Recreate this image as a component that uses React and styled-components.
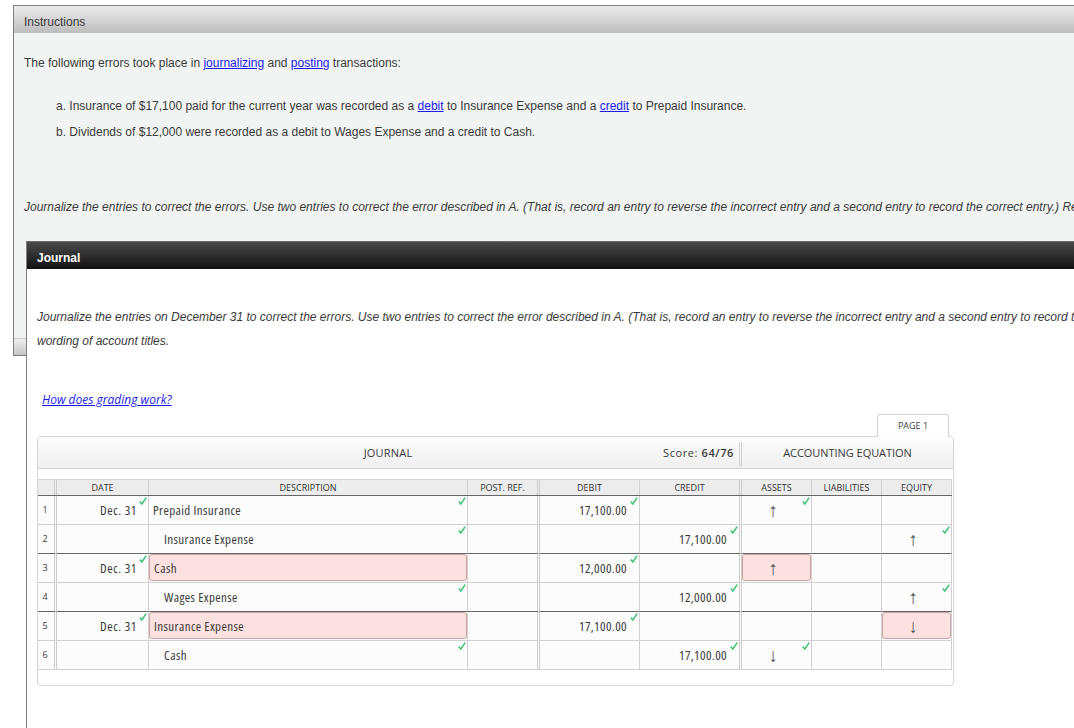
import React from "react";
import styled, { createGlobalStyle } from "styled-components";

const GlobalStyle = createGlobalStyle`
  html, body {
    margin: 0;
    padding: 0;
    height: 100%;
    overflow: hidden;
    background: #fff;
  }
  #root {
    height: 100%;
  }
`;

const COLUMNS = "19px 92px 319px 72px 100px 102px 70px 70px 70px";
const TABLE_FONT = `"Open Sans", "Liberation Sans", sans-serif`;

const rows = [
  { num: 1, date: "Dec. 31", dateCheck: true, desc: "Prepaid Insurance", debit: "17,100.00", assets: "↑", assetsCheck: true },
  { num: 2, desc: "Insurance Expense", indent: true, credit: "17,100.00", equity: "↑", equityCheck: true, divider: true },
  { num: 3, date: "Dec. 31", dateCheck: true, desc: "Cash", wrongDesc: true, debit: "12,000.00", assets: "↑", wrongAssets: true },
  { num: 4, desc: "Wages Expense", indent: true, credit: "12,000.00", equity: "↑", equityCheck: true, divider: true },
  { num: 5, date: "Dec. 31", dateCheck: true, desc: "Insurance Expense", wrongDesc: true, debit: "17,100.00", equity: "↓", wrongEquity: true },
  { num: 6, desc: "Cash", indent: true, credit: "17,100.00", assets: "↓", assetsCheck: true },
];

const Check = () => (
  <CheckIcon viewBox="0 0 8 8" aria-hidden="true">
    <path d="M0.8 4.6 L2.8 7 L7.2 0.6" fill="none" stroke="#47c27c" strokeWidth="1.6" />
  </CheckIcon>
);

const App = () => (
  <>
    <GlobalStyle />
    <Page>
      <Panel>
        <PanelHeader>Instructions</PanelHeader>
        <PanelBody>
          <Intro>
            The following errors took place in <a href="#j">journalizing</a> and{" "}
            <a href="#p">posting</a> transactions:
          </Intro>
          <ErrorList>
            <li>
              a. Insurance of $17,100 paid for the current year was recorded as a{" "}
              <a href="#d">debit</a> to Insurance Expense and a <a href="#c">credit</a> to
              Prepaid Insurance.
            </li>
            <li>b. Dividends of $12,000 were recorded as a debit to Wages Expense and a credit to Cash.</li>
          </ErrorList>
          <Directions>
            Journalize the entries to correct the errors. Use two entries to correct the error
            described in A. (That is, record an entry to reverse the incorrect entry and a second
            entry to record the correct entry.) Refer to the Chart of Accounts for exact wording of
            account titles.
          </Directions>
        </PanelBody>
        <PanelFooter />
      </Panel>

      <JournalWindow>
        <JournalHeader>Journal</JournalHeader>
        <JournalBody>
          <JournalText>
            <span>
              Journalize the entries on December 31 to correct the errors. Use two entries to correct
              the error described in A. (That is, record an entry to reverse the incorrect entry and a
              second entry to record the correct entry.) Refer to the Chart of Accounts for exact
            </span>
            <span>wording of account titles.</span>
          </JournalText>
          <GradingLink href="#g">How does grading work?</GradingLink>
          <TabRow>
            <Tab>PAGE 1</Tab>
          </TabRow>
          <Card>
            <TitleBar>
              <JournalTitle>JOURNAL</JournalTitle>
              <Score>
                Score: <b>64/76</b>
              </Score>
              <EquationTitle>ACCOUNTING EQUATION</EquationTitle>
            </TitleBar>
            <Table>
              <HeadRow>
                <HeadCell $double />
                <HeadCell>DATE</HeadCell>
                <HeadCell>DESCRIPTION</HeadCell>
                <HeadCell $double>POST. REF.</HeadCell>
                <HeadCell>DEBIT</HeadCell>
                <HeadCell $double>CREDIT</HeadCell>
                <HeadCell>ASSETS</HeadCell>
                <HeadCell>LIABILITIES</HeadCell>
                <HeadCell>EQUITY</HeadCell>
              </HeadRow>
              {rows.map((r) => (
                <Row key={r.num}>
                  <NumCell $divider={r.divider}>{r.num}</NumCell>
                  <Cell $divider={r.divider} $align="right">
                    {r.date}
                    {r.dateCheck && <Check />}
                  </Cell>
                  <DescCell $divider={r.divider} $wrong={r.wrongDesc} $indent={r.indent}>
                    {r.desc}
                    {!r.wrongDesc && <Check />}
                  </DescCell>
                  <Cell $divider={r.divider} $double />
                  <MoneyCell $divider={r.divider} $align="right">
                    {r.debit}
                    {r.debit && <Check />}
                  </MoneyCell>
                  <MoneyCell $divider={r.divider} $align="right" $double>
                    {r.credit}
                    {r.credit && <Check />}
                  </MoneyCell>
                  <Cell $divider={r.divider} $align="center" $wrong={r.wrongAssets}>
                    <Arrow>{r.assets}</Arrow>
                    {r.assetsCheck && <Check />}
                  </Cell>
                  <Cell $divider={r.divider} />
                  <Cell $divider={r.divider} $align="center" $wrong={r.wrongEquity}>
                    <Arrow>{r.equity}</Arrow>
                    {r.equityCheck && <Check />}
                  </Cell>
                </Row>
              ))}
            </Table>
            <CardFooter />
          </Card>
        </JournalBody>
      </JournalWindow>
    </Page>
  </>
);

const Page = styled.div`
  position: relative;
  height: 100%;
  overflow: hidden;
  padding: 5px 0 0 13px;
  box-sizing: border-box;
  font: 12px/16px "Liberation Sans", Arial, sans-serif;
  color: #3a3a3a;

  a {
    color: #1a1aee;
  }
`;

const Panel = styled.section`
  border: 1px solid #808080;
  border-right: 0;
  width: 1200px;
`;

const PanelHeader = styled.header`
  height: 27px;
  line-height: 33px;
  padding-left: 10px;
  background: linear-gradient(#ececec, #bdbdbd);
`;

const PanelBody = styled.div`
  height: 305px;
  padding: 22px 10px 0;
  background: #f2f4f3;
  box-sizing: border-box;
`;

const Intro = styled.p`
  margin: 0;
`;

const ErrorList = styled.ul`
  list-style: none;
  margin: 22px 0 0;
  padding: 0 0 0 32px;

  li {
    height: 26px;
    line-height: 26px;
  }
`;

const Directions = styled.p`
  margin: 54px 0 0;
  white-space: nowrap;
  font-style: italic;
`;

const PanelFooter = styled.div`
  height: 16px;
  background: linear-gradient(#f0f0f0, #c4c4c4);
  border-top: 1px solid #c9c9c9;
`;

/* the window floats over the instructions panel */
const JournalWindow = styled.section`
  position: absolute;
  top: 241px;
  left: 26px;
  right: 0;
  bottom: 0;
  background: #fff;
  border-top: 1px solid #6e6e6e;
  border-left: 1px solid #808080;
`;

const JournalHeader = styled.header`
  height: 27px;
  line-height: 33px;
  padding-left: 10px;
  font-weight: bold;
  color: #fff;
  background: linear-gradient(#4a4a4a, #111);
`;

const JournalBody = styled.div`
  padding: 36px 0 0 10px;
`;

const JournalText = styled.p`
  margin: 0;
  font-style: italic;
  line-height: 24px;
  white-space: nowrap;

  span {
    display: block;
  }
`;

const GradingLink = styled.a`
  display: block;
  width: fit-content;
  margin: 39px 0 0 5px;
  font: italic 12px/16px "Open Sans", sans-serif;
`;

const TabRow = styled.div`
  display: flex;
  justify-content: flex-end;
  width: 912px;
  margin-top: 6px;
`;

const Tab = styled.div`
  width: 70px;
  height: 22px;
  margin-bottom: -1px;
  position: relative;
  border: 1px solid #d4d4d4;
  border-bottom: 0;
  border-radius: 3px 3px 0 0;
  background: #fff;
  text-align: center;
  font: 9px/22px ${TABLE_FONT};
`;

const Card = styled.div`
  width: 915px;
  border: 1px solid #d6d6d6;
  border-radius: 4px;
  background: #fff;
  font-family: ${TABLE_FONT};
`;

const TitleBar = styled.div`
  display: grid;
  grid-template-columns: 628px 76px 211px;
  height: 31px;
  margin-bottom: 10px;
  border-bottom: 1px solid #d6d6d6;
  background: linear-gradient(#fdfdfd, #efefef);
  border-radius: 4px 4px 0 0;
  text-align: center;
  font-size: 11px;
  line-height: 31px;
`;

const JournalTitle = styled.div`
  padding-left: 72px;
  letter-spacing: 0.2px;
`;

const Score = styled.div`
  text-align: right;
  padding-right: 5px;
  margin: 5px 0 0 -60px;
  width: 136px;
  height: 24px;
  border-right: 3px double #d0d0d0;
  box-sizing: border-box;
  line-height: 21px;
  letter-spacing: 0.6px;

  b {
    font-weight: 600;
  }
`;

const EquationTitle = styled.div`
  letter-spacing: -0.05px;
`;

const Table = styled.div`
  width: 914px;
`;

const HeadRow = styled.div`
  display: grid;
  grid-template-columns: ${COLUMNS};
  height: 17px;
  background: #ececec;
  border-top: 1px solid #d6d6d6;
  border-bottom: 1px solid #666;
  box-sizing: border-box;
`;

const HeadCell = styled.div`
  text-align: center;
  font-size: 9px;
  line-height: 15px;
  color: #333;
  border-right: ${(p) => (p.$double ? "3px double #ccc" : "1px solid #d0d0d0")};
`;

const Row = styled.div`
  display: grid;
  grid-template-columns: ${COLUMNS};
  grid-template-rows: 29px;
`;

const Cell = styled.div`
  position: relative;
  isolation: isolate;
  box-sizing: border-box;
  background: #fcfcfc;
  border-right: ${(p) => (p.$double ? "3px double #ccc" : "1px solid #d0d0d0")};
  border-bottom: 1px solid ${(p) => (p.$divider ? "#666" : "#d0d0d0")};
  text-align: ${(p) => p.$align || "left"};
  font-size: 13px;
  font-stretch: 85%;
  line-height: 28px;
  letter-spacing: 0.6px;
  color: #3a3a3a;
  padding-right: ${(p) => (p.$align === "right" ? "11px" : "0")};

  ${(p) =>
    p.$wrong &&
    `
    &::before {
      content: "";
      position: absolute;
      z-index: -1;
      inset: 0 0 1px 0;
      background: #fde1e1;
      border: 1px solid #c9a5a5;
      border-radius: 3px;
    }
  `}
`;

const DescCell = styled(Cell)`
  padding-left: ${(p) => (p.$indent ? "15px" : p.$wrong ? "5px" : "4px")};
  letter-spacing: 0.4px;
`;

const MoneyCell = styled(Cell)`
  padding-right: 12px;
  letter-spacing: 0.4px;
`;

const NumCell = styled(Cell)`
  border-right: 3px double #ccc;
  font-size: 9px;
  font-stretch: 100%;
  letter-spacing: 0;
  text-align: center;
  padding-right: 2px;
`;

const Arrow = styled.span`
  font: 19px/28px "Liberation Sans", sans-serif;
  color: #555;
  position: relative;
  left: -3px;
  top: 1px;
`;

const CheckIcon = styled.svg`
  position: absolute;
  top: 1px;
  right: 1px;
  width: 8px;
  height: 8px;
`;

const CardFooter = styled.div`
  height: 15px;
`;

export default App;
